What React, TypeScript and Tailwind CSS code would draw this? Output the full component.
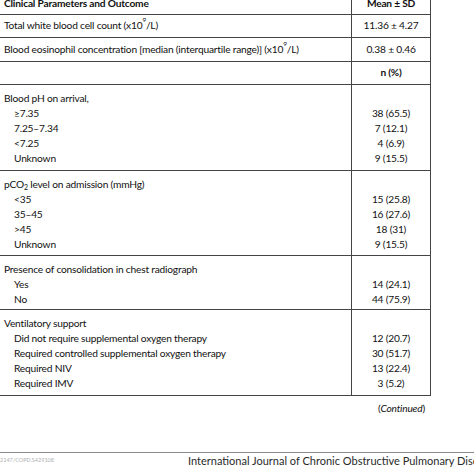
import React from 'react';

type Group = {
    title: React.ReactNode;
    items: [string, string][];
    h: string;
};

const groups: Group[] = [
    {
        title: 'Blood pH on arrival,',
        items: [
            ['≥7.35', '38 (65.5)'],
            ['7.25–7.34', '7 (12.1)'],
            ['<7.25', '4 (6.9)'],
            ['Unknown', '9 (15.5)'],
        ],
        h: 'h-[86px]',
    },
    {
        title: (
            <>
                pCO<sub className="text-[7px] leading-none">2</sub> level on admission (mmHg)
            </>
        ),
        items: [
            ['<35', '15 (25.8)'],
            ['35–45', '16 (27.6)'],
            ['>45', '18 (31)'],
            ['Unknown', '9 (15.5)'],
        ],
        h: 'h-[85px]',
    },
    {
        title: 'Presence of consolidation in chest radiograph',
        items: [
            ['Yes', '14 (24.1)'],
            ['No', '44 (75.9)'],
        ],
        h: 'h-[54px]',
    },
    {
        title: 'Ventilatory support',
        items: [
            ['Did not require supplemental oxygen therapy', '12 (20.7)'],
            ['Required controlled supplemental oxygen therapy', '30 (51.7)'],
            ['Required NIV', '13 (22.4)'],
            ['Required IMV', '3 (5.2)'],
        ],
        h: 'h-[85px]',
    },
];

const Sup9 = () => <sup className="text-[6.5px] leading-none align-[4px]">9</sup>;

export default function App() {
    return (
        <div
            className="w-[474px] h-[474px] bg-white overflow-hidden text-[#111] text-[10.2px] tracking-[-0.2px]"
            style={{ fontFamily: 'Lato, "Liberation Sans", sans-serif' }}
        >
            {/* --- TABLE --- */}
            <div className="mt-[-6px] w-[431px] border-r border-b border-[#444]">
                {/* Header */}
                <div className="flex h-[21px] border-b border-[#444] font-bold">
                    <div className="w-[352px] shrink-0 border-r border-[#444] pl-[4px] flex items-center">
                        Clinical Parameters and Outcome
                    </div>
                    <div className="flex-1 flex items-center justify-center">Mean ± SD</div>
                </div>

                <div className="flex h-[23px] border-b border-[#444]">
                    <div className="w-[352px] shrink-0 border-r border-[#444] pl-[4px] flex items-center">
                        <span>
                            Total white blood cell count (x10<Sup9 />/L)
                        </span>
                    </div>
                    <div className="flex-1 flex items-center justify-center">11.36 ± 4.27</div>
                </div>

                <div className="flex h-[24px] border-b border-[#444]">
                    <div className="w-[352px] shrink-0 border-r border-[#444] pl-[4px] flex items-center">
                        <span>
                            Blood eosinophil concentration [median (interquartile range)] (x10<Sup9 />/L)
                        </span>
                    </div>
                    <div className="flex-1 flex items-center justify-center">0.38 ± 0.46</div>
                </div>

                <div className="flex h-[23px] border-b border-[#444]">
                    <div className="w-[352px] shrink-0 border-r border-[#444]" />
                    <div className="flex-1 flex items-center justify-center font-bold">n (%)</div>
                </div>

                {/* Grouped rows */}
                {groups.map((g, gi) => (
                    <div
                        key={gi}
                        className={`flex ${g.h} ${gi < groups.length - 1 ? 'border-b border-[#444]' : ''}`}
                    >
                        <div className="w-[352px] shrink-0 border-r border-[#444] pl-[4px] pt-[6px] leading-[15px]">
                            <div>{g.title}</div>
                            {g.items.map(([label]) => (
                                <div key={label} className="pl-[10px]">
                                    {label}
                                </div>
                            ))}
                        </div>
                        <div className="flex-1 pt-[6px] leading-[15px] text-center">
                            <div>&nbsp;</div>
                            {g.items.map(([label, val]) => (
                                <div key={label}>{val}</div>
                            ))}
                        </div>
                    </div>
                ))}
            </div>

            {/* Continued */}
            <div className="w-[431px] mt-[5px] pr-[6px] text-right leading-[15px]">
                (<span className="italic">Continued</span>)
            </div>

            {/* --- PAGE FOOTER --- */}
            <div className="mt-[36px] border-t border-[#8a8a8a] flex items-start pt-[1px] leading-[13px] whitespace-nowrap tracking-normal">
                <div className="w-[188px] shrink-0 text-[5.5px] text-[#b0b0b0]">2147/COPD.S429108</div>
                <div className="text-[11px] text-[#2a2a2a]">
                    International Journal of Chronic Obstructive Pulmonary Disease
                </div>
            </div>
        </div>
    );
}
